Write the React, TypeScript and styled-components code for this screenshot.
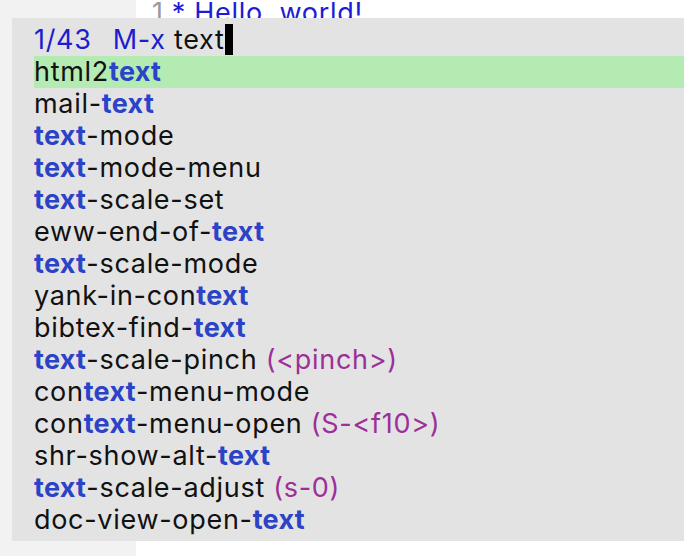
import React from "react";
import styled, { createGlobalStyle } from "styled-components";

const GlobalStyle = createGlobalStyle`
  html, body {
    margin: 0;
    padding: 0;
    background: #fff;
  }
  body {
    font-family: Inter, "DejaVu Sans", sans-serif;
  }
`;

type Candidate = {
  before?: string;
  match: string;
  after?: string;
  key?: string;
};

const candidates: Candidate[] = [
  { before: "html2", match: "text" },
  { before: "mail-", match: "text" },
  { match: "text", after: "-mode" },
  { match: "text", after: "-mode-menu" },
  { match: "text", after: "-scale-set" },
  { before: "eww-end-of-", match: "text" },
  { match: "text", after: "-scale-mode" },
  { before: "yank-in-con", match: "text" },
  { before: "bibtex-find-", match: "text" },
  { match: "text", after: "-scale-pinch", key: "(<pinch>)" },
  { before: "con", match: "text", after: "-menu-mode" },
  { before: "con", match: "text", after: "-menu-open", key: "(S-<f10>)" },
  { before: "shr-show-alt-", match: "text" },
  { match: "text", after: "-scale-adjust", key: "(s-0)" },
  { before: "doc-view-open-", match: "text" },
];

export default function App() {
  return (
    <>
      <GlobalStyle />
      <Frame>
        <Fringe />
        <Buffer>
          <LineNo>1</LineNo>
          <Heading>* Hello, world!</Heading>
        </Buffer>
        <Popup>
          <List>
            <Row>
              <Count>1/43</Count>
              <Prompt>M-x</Prompt> text
              <Cursor />
            </Row>
            {candidates.map((c, i) => (
              <Row key={i} selected={i === 0}>
                {c.before}
                <Match>{c.match}</Match>
                {c.after}
                {c.key && <Binding> {c.key}</Binding>}
              </Row>
            ))}
          </List>
        </Popup>
      </Frame>
    </>
  );
}

const Frame = styled.div`
  position: relative;
  display: flex;
  width: 684px;
  height: 556px;
  overflow: hidden;
`;

const Fringe = styled.div`
  width: 136px;
  flex: none;
  background: #f2f2f2;
`;

const Buffer = styled.div`
  flex: 1;
  padding: 0 0 0 16px;
  font-size: 27px;
  line-height: 32px;
  letter-spacing: 0.7px;
  margin-top: -3px;
  white-space: pre;
`;

const LineNo = styled.span`
  color: #9a9a9a;
  margin-right: 8px;
`;

const Heading = styled.span`
  color: #1c1cd8;
`;

const Popup = styled.div`
  position: absolute;
  left: 12px;
  top: 18px;
  right: 0;
  height: 523px;
  background: #e3e3e3;
  padding: 6px 0 5px 22px;
  box-sizing: border-box;
`;

const List = styled.div`
  display: flex;
  flex-direction: column;
`;

const Row = styled.div<{ selected?: boolean }>`
  height: 32px;
  line-height: 32px;
  box-sizing: border-box;
  font-size: 27px;
  letter-spacing: 0.7px;
  color: #111;
  white-space: pre;
  display: flex;
  align-items: flex-start;
  background: ${({ selected }) => (selected ? "#b3ebb3" : "transparent")};
`;

const Count = styled.span`
  color: #1c1cd0;
  margin-right: 21px;
`;

const Prompt = styled.span`
  color: #1c1cd0;
`;

const Match = styled.span`
  color: #2b43c6;
  font-weight: 700;
  letter-spacing: 0.3px;
`;

const Binding = styled.span`
  color: #9c2f98;
`;

const Cursor = styled.span`
  display: inline-block;
  width: 8px;
  height: 31px;
  background: #000;
`;
